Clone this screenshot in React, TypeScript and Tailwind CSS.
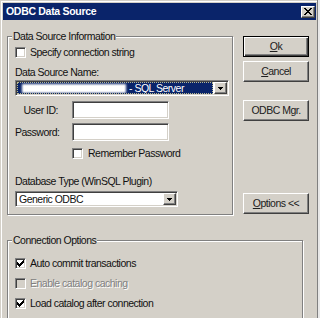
import type { ReactNode } from 'react';

const sunken =
  'border border-t-[#808080] border-l-[#808080] border-r-white border-b-white shadow-[inset_1px_1px_0_#404040,inset_-1px_-1px_0_#d4d0c8]';
const raised =
  'border border-t-white border-l-white border-r-[#404040] border-b-[#404040] shadow-[inset_-1px_-1px_0_#808080]';

function Check() {
  // classic 7x7 windows check mark
  const cols = [2, 3, 4, 3, 2, 1, 0];
  return (
    <svg width="7" height="7" viewBox="0 0 7 7" className="block">
      {cols.map((y, x) => (
        <rect key={x} x={x} y={y} width="1" height="3" fill="#000" />
      ))}
    </svg>
  );
}

function CheckBox({ checked, disabled }: { checked?: boolean; disabled?: boolean }) {
  return (
    <span
      className={`w-[11px] h-[11px] shrink-0 flex items-center justify-center ${sunken} ${
        disabled ? 'bg-[#d4d0c8]' : 'bg-white'
      }`}
    >
      {checked && <Check />}
    </span>
  );
}

function Arrow() {
  return (
    <svg width="5" height="3" viewBox="0 0 5 3" className="block">
      <rect x="0" y="0" width="5" height="1" fill="#000" />
      <rect x="1" y="1" width="3" height="1" fill="#000" />
      <rect x="2" y="2" width="1" height="1" fill="#000" />
    </svg>
  );
}

function CloseGlyph() {
  const rows = [
    [0, 1, 6, 7],
    [1, 2, 5, 6],
    [2, 3, 4, 5],
    [3, 4],
    [2, 3, 4, 5],
    [1, 2, 5, 6],
    [0, 1, 6, 7],
  ];
  return (
    <svg width="8" height="7" viewBox="0 0 8 7" className="block">
      {rows.map((r, y) => r.map((x) => <rect key={`${y}-${x}`} x={x} y={y} width="1" height="1" fill="#000" />))}
    </svg>
  );
}

function GroupBox({ label, className, children }: { label: string; className: string; children: ReactNode }) {
  return (
    <div className={`relative border border-[#808080] shadow-[inset_1px_1px_0_#fff,1px_1px_0_#fff] ${className}`}>
      <span className="absolute left-[4px] top-[-7px] px-[1px] bg-[#d4d0c8] leading-[13px] whitespace-nowrap">
        {label}
      </span>
      {children}
    </div>
  );
}

function Button({ children, primary, className }: { children: ReactNode; primary?: boolean; className?: string }) {
  return (
    <div
      className={`w-[66px] h-[21px] flex items-center justify-center text-[#202020] ${
        primary
          ? 'border border-black shadow-[inset_1px_1px_0_#fff,inset_-1px_-1px_0_#404040,inset_-2px_-2px_0_#808080]'
          : raised
      } ${className ?? ''}`}
    >
      {children}
    </div>
  );
}

export default function App() {
  return (
    <div className="w-[320px] h-[318px] overflow-hidden bg-[#e8e8e8] font-['Liberation_Sans',sans-serif] text-[10.5px] tracking-[-0.5px] leading-[13px] text-[#111]">
      <div className="w-[318px] h-[318px] bg-[#d4d0c8] border-r border-r-[#808080] pt-[1px] pl-[1px]">
        <div className="h-full border-t border-l border-white pt-[1px] pl-[1px]">
          {/* title bar */}
          <div className="w-[313px] h-[17px] bg-[#0a246a] flex items-center justify-between pl-[3px] pr-[1px]">
            <span className="text-white font-bold text-[10.5px] tracking-[-0.3px]">ODBC Data Source</span>
            <span className={`w-[14px] h-[12px] bg-[#d4d0c8] flex items-center justify-center ${raised}`}>
              <CloseGlyph />
            </span>
          </div>

          <div className="flex items-start mt-[16px] ml-[4px]">
            <GroupBox label="Data Source Information" className="w-[226px] h-[179px] pl-[7px]">
              <div className="mt-[10px] flex items-center gap-[4px] h-[11px]">
                <CheckBox />
                <span>Specify connection string</span>
              </div>
              <div className="mt-[8px] h-[13px]">Data Source Name:</div>
              <div className={`mt-[1px] w-[214px] h-[16px] bg-white flex p-[1px] ${sunken}`}>
                <div className="flex-1 mr-[1px] bg-[#0a246a] border border-dotted border-[#b8b890] flex items-center text-white overflow-hidden whitespace-nowrap">
                  <span className="ml-[4px] w-[104px] h-[9px] bg-white blur-[1px] shrink-0" />
                  <span className="ml-[3px]">- SQL Server</span>
                </div>
                <div className={`w-[13px] h-full bg-[#d4d0c8] flex items-center justify-center ${raised}`}>
                  <Arrow />
                </div>
              </div>

              <div className="mt-[5px] flex items-center h-[18px]">
                <span className="w-[43px] text-right">User ID:</span>
                <span className={`ml-[14px] w-[97px] h-[18px] bg-white ${sunken}`} />
              </div>
              <div className="mt-[4px] flex items-center h-[18px]">
                <span className="w-[43px] text-right">Password:</span>
                <span className={`ml-[14px] w-[97px] h-[18px] bg-white ${sunken}`} />
              </div>
              <div className="mt-[7px] ml-[57px] flex items-center gap-[5px] h-[11px]">
                <CheckBox />
                <span>Remember Password</span>
              </div>

              <div className="mt-[16px] h-[13px]">Database Type (WinSQL Plugin)</div>
              <div className={`mt-[3px] w-[163px] h-[16px] bg-white flex p-[1px] ${sunken}`}>
                <div className="flex-1 flex items-center pl-[2px]">Generic ODBC</div>
                <div className={`w-[13px] h-full bg-[#d4d0c8] flex items-center justify-center ${raised}`}>
                  <Arrow />
                </div>
              </div>
            </GroupBox>

            <div className="ml-[10px] flex flex-col">
              <Button primary>
                <span className="underline underline-offset-[1px]">O</span>k
              </Button>
              <Button className="mt-[4px]">
                <span className="underline underline-offset-[1px]">C</span>ancel
              </Button>
              <Button className="mt-[18px]">ODBC Mgr.</Button>
              <Button className="mt-[72px]">
                <span className="underline underline-offset-[1px]">O</span>ptions &lt;&lt;
              </Button>
            </div>
          </div>

          <GroupBox label="Connection Options" className="mt-[25px] ml-[4px] w-[296px] h-[100px] pl-[7px]">
            <div className="mt-[17px] flex items-center gap-[4px] h-[11px]">
              <CheckBox checked />
              <span>Auto commit transactions</span>
            </div>
            <div className="mt-[9px] flex items-center gap-[4px] h-[11px]">
              <CheckBox disabled />
              <span className="text-[#808080] [text-shadow:1px_1px_0_#fff]">Enable catalog caching</span>
            </div>
            <div className="mt-[9px] flex items-center gap-[4px] h-[11px]">
              <CheckBox checked />
              <span>Load catalog after connection</span>
            </div>
          </GroupBox>
        </div>
      </div>
    </div>
  );
}
